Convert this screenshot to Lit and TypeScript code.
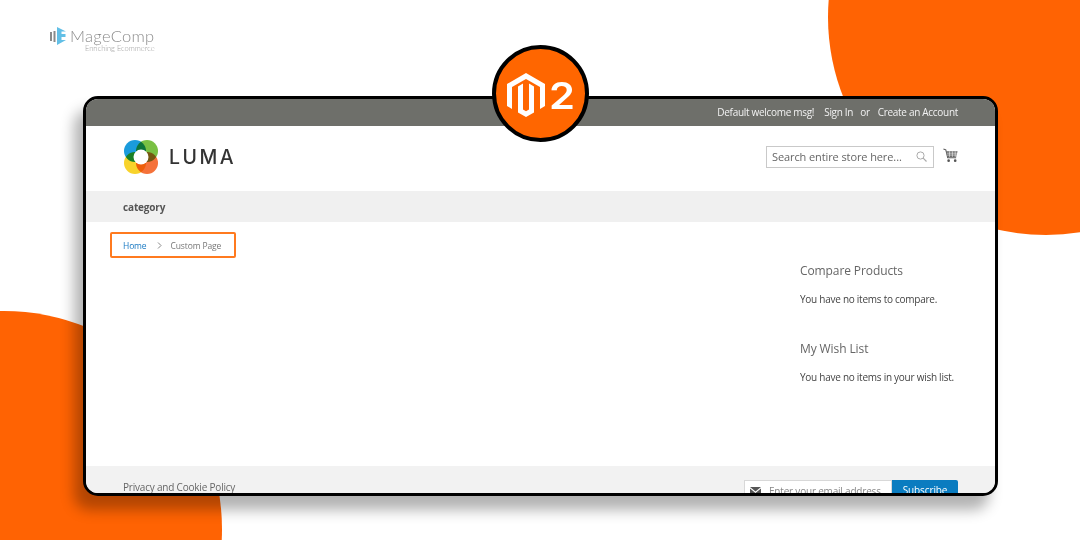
import { LitElement, html, css, svg } from "lit";
import { customElement } from "lit/decorators.js";

const logoMark = svg`<svg width="34" height="34" viewBox="0 0 34 34" class="mark">
  <circle cx="11" cy="11" r="11" fill="#1a9bdc"/>
  <circle cx="23" cy="11" r="11" fill="#79c043" style="mix-blend-mode:multiply"/>
  <circle cx="11" cy="23" r="11" fill="#f8d32c" style="mix-blend-mode:multiply"/>
  <circle cx="23" cy="23" r="11" fill="#f5723a" style="mix-blend-mode:multiply"/>
  <circle cx="17" cy="17" r="7.500" fill="#fff"/>
</svg>`;

const magento = svg`<svg width="38" height="44" viewBox="0 0 38 44" class="hex">
  <path fill="#fff" d="M19 0 38 11V33L33 36V14L19 6 5 14V36L0 33V11Z"/>
  <path fill="#fff" d="M19 44 11 39.500V13.500L16 10.600V36.500L19 38.300 22 36.500V10.600L27 13.500V39.500Z"/>
</svg>`;

const two = svg`<svg width="30" height="36" viewBox="0 0 30 36" class="two"><text x="15" y="30" text-anchor="middle" font-family="Inter, 'Liberation Sans', sans-serif" font-weight="600" font-size="37" fill="#fff" textLength="26" lengthAdjust="spacingAndGlyphs">2</text></svg>`;

const cart = svg`<svg width="15" height="15" viewBox="0 0 16 15">
  <path fill="none" stroke="#555" stroke-width="1.100" d="M0.500 0.500 3 1.500 5 10H14"/>
  <path fill="#666" d="M3.500 3H15.500L14 9H5Z"/>
  <path stroke="#fff" stroke-width=".6" d="M7 3V9M10 3V9M13 3V9M4 5H15M4.500 7H15"/>
  <circle cx="6" cy="13" r="1.400" fill="#555"/><circle cx="13" cy="13" r="1.400" fill="#555"/>
</svg>`;

const search = svg`<svg width="11" height="11" viewBox="0 0 11 11"><circle cx="4.500" cy="4.500" r="3.600" fill="none" stroke="#aaa" stroke-width="1"/><path d="M7.200 7.200 10.500 10.500" stroke="#aaa" stroke-width="1.200"/></svg>`;

const mail = svg`<svg width="11" height="9" viewBox="0 0 11 9"><path fill="#555" d="M0 0H11L5.500 4.500ZM0 1.500 5.500 6 11 1.500V9H0Z"/></svg>`;

const chevron = svg`<svg width="5" height="7" viewBox="0 0 5 7"><path d="M1 .5 4 3.500 1 6.500" fill="none" stroke="#888" stroke-width="1"/></svg>`;

const brand = svg`<svg width="17" height="18" viewBox="0 0 17 18">
  <path fill="#8a8a8a" d="M0 5H2V14H0ZM3.500 4H5.500V15H3.500Z"/>
  <path fill="#62bfe6" d="M7 0 16 4.500H11.500V7H15.500V10H11.500V13H16L7 18Z"/>
</svg>`;

@customElement("app-root")
export class AppRoot extends LitElement {
  static styles = css`
    :host { display: block; width: 1080px; height: 540px; position: relative; overflow: hidden; background: #fff; font-family: "Open Sans", sans-serif; color: #575757; }
    .blob { position: absolute; border-radius: 50%; background: #ff6303; width: 436px; height: 436px; }
    .blob.tr { left: 828px; top: -201px; }
    .blob.bl { left: -214px; top: 311px; }
    .page { position: relative; padding: 96px 0 0 83px; }
    .brand { position: absolute; left: 50px; top: 27px; display: flex; gap: 3px; color: #8b8b8b; }
    .brand-name { font: 300 16.500px/18px Lato, sans-serif; letter-spacing: .3px; }
    .brand-tag { position: absolute; left: 35px; top: 18px; font: 300 7.500px/8px Lato, sans-serif; white-space: nowrap; color: #999; }
    .win { box-sizing: border-box; width: 915px; height: 400px; border: 3px solid #000; border-radius: 15px; background: #fff; box-shadow: -9px 14px 14px rgba(0,0,0,.3); display: flex; flex-direction: column; overflow: hidden; }
    .top { height: 26.500px; flex: none; background: #6e6f6a; color: #f2f2f2; font-size: 10px; letter-spacing: -.3px; display: flex; justify-content: flex-end; align-items: center; gap: 10px; padding: 0 37px 0 0; }
    .top .or { margin: 0 -2px 0 -3px; }
    .head { height: 65.500px; flex: none; box-sizing: border-box; display: flex; align-items: center; padding: 0 37px 3px 38px; }
    .logo { display: flex; align-items: center; gap: 11px; }
    .luma { font: 500 19.500px/26px Inter, sans-serif; letter-spacing: 2.500px; color: #333; }
    .spacer { flex: 1; }
    .search { width: 168px; height: 22px; box-sizing: border-box; border: 1px solid #c9c9c9; display: flex; align-items: center; justify-content: space-between; padding: 0 6px 0 5px; font-size: 11px; letter-spacing: -.1px; color: #666; margin-right: 9px; }
    .cart { display: flex; margin-top: -3px; }
    .nav { height: 31px; flex: none; background: #f0f0f0; padding-left: 37px; font-size: 10px; letter-spacing: -.15px; font-weight: 700; line-height: 32px; color: #555; }
    .main { flex: 1; display: flex; justify-content: space-between; }
    .crumbs { align-self: flex-start; margin: 10px 0 0 24px; box-sizing: border-box; width: 126px; height: 26px; border: 2px solid #ff7a1f; border-radius: 2px; display: flex; align-items: center; padding-left: 11px; font-size: 8.500px; letter-spacing: -.13px; color: #777; }
    .crumbs .home { color: #1979c3; }
    .crumbs svg { margin: 0 9px 0 10px; flex: none; }
    .side { width: 195px; padding-top: 40px; box-sizing: border-box; }
    .side h3 { margin: 0; font-size: 12px; letter-spacing: -.1px; font-weight: 400; line-height: 18px; color: #666; }
    .side p { margin: 12px 0 34px; font-size: 10px; letter-spacing: -.26px; line-height: 14px; color: #444; }
    .foot { height: 27px; flex: none; background: #f2f2f2; display: flex; justify-content: space-between; padding: 14px 37px 0 37px; box-sizing: border-box; font-size: 10px; letter-spacing: -.2px; color: #666; overflow: hidden; }
    .foot .priv { line-height: 14px; }
    .sub { display: flex; width: 214px; height: 26px; flex: none; }
    .sub .inp { width: 148px; background: #fff; box-sizing: border-box; border: 1px solid #d8d8d8; display: flex; align-items: flex-start; padding: 3px 0 0 5px; gap: 8px; line-height: 14px; color: #888; }
    .sub .inp svg { margin-top: 3px; flex: none; }
    .sub .btn { flex: 1; background: #0a7cc0; color: #fff; text-align: center; line-height: 21px; letter-spacing: -.1px; border-radius: 0 2px 0 0; }
    .badge { position: absolute; left: 492px; top: 45px; width: 97px; height: 97px; box-sizing: border-box; border: 4px solid #000; border-radius: 50%; background: #ff6600; display: flex; align-items: center; justify-content: center; gap: 2px; padding: 0 0 1px 3px; }
    .hex { margin-top: 3px; }
    .two { margin-top: 8px; }
  `;

  render() {
    return html`
      <div class="blob tr"></div>
      <div class="blob bl"></div>
      <div class="brand">
        ${brand}
        <div class="brand-name">MageComp</div>
        <div class="brand-tag">Enriching Ecommerce</div>
      </div>
      <div class="page">
        <div class="win">
          <div class="top">
            <span>Default welcome msg!</span><span>Sign In</span><span class="or">or</span><span>Create an Account</span>
          </div>
          <div class="head">
            <div class="logo">${logoMark}<span class="luma">LUMA</span></div>
            <div class="spacer"></div>
            <div class="search"><span>Search entire store here...</span>${search}</div>
            <div class="cart">${cart}</div>
          </div>
          <div class="nav">category</div>
          <div class="main">
            <div class="crumbs"><span class="home">Home</span>${chevron}<span>Custom Page</span></div>
            <div class="side">
              <h3>Compare Products</h3>
              <p>You have no items to compare.</p>
              <h3>My Wish List</h3>
              <p>You have no items in your wish list.</p>
            </div>
          </div>
          <div class="foot">
            <span class="priv">Privacy and Cookie Policy</span>
            <div class="sub">
              <div class="inp">${mail}<span>Enter your email address</span></div>
              <div class="btn">Subscribe</div>
            </div>
          </div>
        </div>
      </div>
      <div class="badge">${magento}${two}</div>
    `;
  }
}
